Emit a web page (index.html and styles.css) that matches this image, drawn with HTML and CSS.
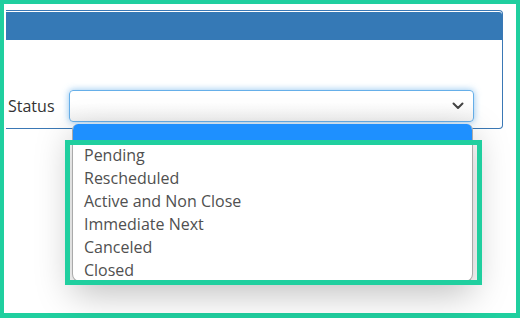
FILE: index.html
```html
<!DOCTYPE html>
<html>
<head>
<meta charset="utf-8">
<link rel="stylesheet" href="styles.css">
</head>
<body>
<div class="frame">
  <div class="panel">
    <div class="panel-heading"></div>
    <div class="panel-body">
      <div class="field">
        <label class="field-label">Status</label>
        <div class="select">
          <svg class="chevron" width="12" height="8" viewBox="0 0 12 8"><path d="M1.5 1.5 L6 6 L10.5 1.5" fill="none" stroke="#444" stroke-width="2" stroke-linecap="round" stroke-linejoin="round"/></svg>
        </div>
      </div>
    </div>
  </div>
  <div class="dropdown">
    <div class="dropdown-selected"></div>
    <ul class="options">
      <li>Pending</li>
      <li>Rescheduled</li>
      <li>Active and Non Close</li>
      <li>Immediate Next</li>
      <li>Canceled</li>
      <li>Closed</li>
    </ul>
  </div>
  <div class="highlight"></div>
</div>
</body>
</html>
```
FILE: styles.css
```css
html, body {
  margin: 0;
  padding: 0;
}
body {
  width: 520px;
  height: 318px;
  overflow: hidden;
  font-family: "Open Sans", "Liberation Sans", sans-serif;
}
.frame {
  position: relative;
  box-sizing: border-box;
  width: 520px;
  height: 318px;
  border: solid #20cf9f;
  border-width: 4px 4px 5px 4px;
  background: #fff;
  padding: 6px 13px 0 2px;
}
.panel {
  height: 119px;
  box-sizing: border-box;
  border: 1px solid #3a78b5;
  border-left: none;
  border-radius: 0 4px 4px 0;
  padding-top: 1px;
  display: flex;
  flex-direction: column;
}
.panel-heading {
  height: 28px;
  background: #3579b6;
  border-top-right-radius: 3px;
}
.panel-body {
  flex: 1;
  padding: 50px 28px 0 2px;
}
.field {
  display: flex;
  align-items: center;
}
.field-label {
  width: 61px;
  font-size: 16px;
  color: #333;
}
.select {
  position: relative;
  box-sizing: border-box;
  width: 405px;
  height: 32px;
  border: 1px solid #66afe9;
  border-radius: 4px;
  background: linear-gradient(#fff 40%, #f2f2f2);
  box-shadow: 0 0 7px rgba(102, 175, 233, 0.75);
  display: flex;
  align-items: center;
  justify-content: flex-end;
  padding-right: 9px;
}
.chevron {
  display: block;
}
.dropdown {
  position: absolute;
  left: 68px;
  top: 120px;
  width: 401px;
  height: 158px;
  box-sizing: border-box;
  background: #fff;
  border: 1px solid #aaa;
  border-top: none;
  border-radius: 6px 6px 8px 8px;
  overflow: hidden;
  box-shadow: 0 12px 36px rgba(0, 0, 0, 0.25);
}
.dropdown-selected {
  height: 20px;
  background: #1e90ff;
}
.options {
  list-style: none;
  margin: 0;
  padding: 0 0 0 11px;
}
.options li {
  font-size: 16px;
  line-height: 23px;
  color: #505050;
}
.highlight {
  position: absolute;
  left: 61px;
  top: 136px;
  width: 417px;
  height: 145px;
  box-sizing: border-box;
  border: 5px solid #20cf9f;
  pointer-events: none;
}
```
